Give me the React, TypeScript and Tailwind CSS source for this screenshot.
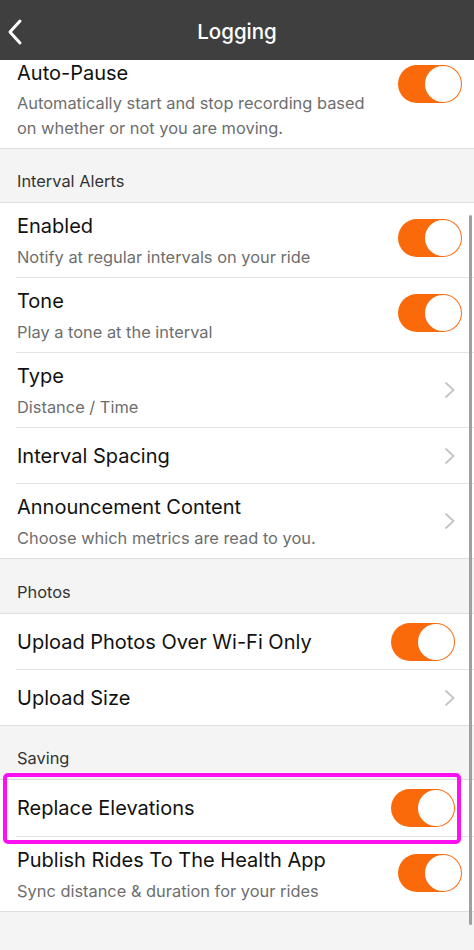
import React from "react";

const font = { fontFamily: "Inter, 'Noto Sans', sans-serif" };

function Toggle({ className = "" }: { className?: string }) {
  return (
    <div className={`relative h-[38px] w-[64px] shrink-0 rounded-full bg-[#fa6a0a] ${className}`}>
      <div className="absolute right-[1px] top-[1px] h-[36px] w-[36px] rounded-full bg-white" />
    </div>
  );
}

function Chevron() {
  return (
    <svg width="12" height="18" viewBox="0 0 12 18" className="shrink-0">
      <path d="M2 2 L9.5 9 L2 16" fill="none" stroke="#c4c4c8" strokeWidth="1.8" strokeLinecap="round" strokeLinejoin="round" />
    </svg>
  );
}

function Section({ title, h }: { title: string; h: string }) {
  return (
    <div className={`flex ${h} items-end border-b border-[#dedede] bg-[#f4f4f4] pb-[11px] pl-[17px]`}>
      <span className="text-[16.4px] leading-[20px] text-[#333]">{title}</span>
    </div>
  );
}

function Sep() {
  return (
    <div className="bg-white pl-[16px]">
      <div className="h-px bg-[#e3e3e3]" />
    </div>
  );
}

function TwoLine({ title, sub, right }: { title: string; sub: string; right: React.ReactNode }) {
  return (
    <div className="flex h-[74px] items-center bg-white pl-[17px]">
      <div className="flex flex-1 flex-col">
        <span className="text-[20px] leading-[26px] text-[#111]">{title}</span>
        <span className="mt-[7px] text-[16.4px] leading-[22px] text-[#6e6e6e]">{sub}</span>
      </div>
      {right}
    </div>
  );
}

function OneLine({ title, right, h = "h-[56px]" }: { title: string; right: React.ReactNode; h?: string }) {
  return (
    <div className={`flex ${h} items-center bg-white pl-[17px]`}>
      <span className="flex-1 text-[20px] leading-[26px] text-[#111]">{title}</span>
      {right}
    </div>
  );
}

export default function App() {
  return (
    <div className="relative h-[950px] w-[474px] overflow-hidden bg-[#f4f4f4]" style={font}>
      <div className="relative flex h-[60px] items-center justify-center bg-[#3f3f3f] pt-[4px]">
        <svg width="20" height="28" viewBox="0 0 20 28" className="absolute left-[6px] top-[18px]">
          <path d="M14 3 L4 14 L14 25" fill="none" stroke="white" strokeWidth="3" strokeLinecap="round" strokeLinejoin="round" />
        </svg>
        <span className="text-[20.5px] font-medium text-white">Logging</span>
      </div>

      <div className="flex h-[89px] items-start border-b border-[#dedede] bg-white pl-[17px]">
        <div className="flex flex-1 flex-col">
          <span className="text-[20px] leading-[26px] text-[#111]">Auto-Pause</span>
          <span className="mt-[5px] text-[16.4px] leading-[25px] text-[#6e6e6e]">
            Automatically start and stop recording based
            <br />
            on whether or not you are moving.
          </span>
        </div>
        <Toggle className="mr-[12px] mt-[5px]" />
      </div>

      <Section title="Interval Alerts" h="h-[54px]" />
      <TwoLine title="Enabled" sub="Notify at regular intervals on your ride" right={<Toggle className="mr-[12px] mb-[4px]" />} />
      <Sep />
      <TwoLine title="Tone" sub="Play a tone at the interval" right={<Toggle className="mr-[12px] mb-[4px]" />} />
      <Sep />
      <TwoLine title="Type" sub="Distance / Time" right={<div className="mr-[18px]"><Chevron /></div>} />
      <Sep />
      <OneLine title="Interval Spacing" h="h-[55px]" right={<div className="mr-[18px]"><Chevron /></div>} />
      <Sep />
      <TwoLine title="Announcement Content" sub="Choose which metrics are read to you." right={<div className="mr-[18px]"><Chevron /></div>} />

      <div className="border-t border-[#dedede]">
        <Section title="Photos" h="h-[55px]" />
      </div>
      <OneLine title="Upload Photos Over Wi-Fi Only" h="h-[55px]" right={<Toggle className="mr-[19px] h-[36px]" />} />
      <Sep />
      <OneLine title="Upload Size" h="h-[55px]" right={<div className="mr-[18px]"><Chevron /></div>} />

      <div className="border-t border-[#dedede]">
        <Section title="Saving" h="h-[54px]" />
      </div>
      <div className="relative">
        <OneLine title="Replace Elevations" right={<Toggle className="mr-[19px]" />} />
        <div className="pointer-events-none absolute -bottom-[8px] left-[3px] right-[13px] -top-[7px] rounded-[5px] border-[4px] border-[#ff10f0]" />
      </div>
      <Sep />
      <TwoLine title="Publish Rides To The Health App" sub="Sync distance & duration for your rides" right={<Toggle className="mr-[12px] mb-[2px]" />} />
      <div className="border-t border-[#dedede]" />

      <div className="absolute right-[2px] top-[215px] h-[710px] w-[3px] rounded-full bg-[#a0a0a0]" />
    </div>
  );
}
